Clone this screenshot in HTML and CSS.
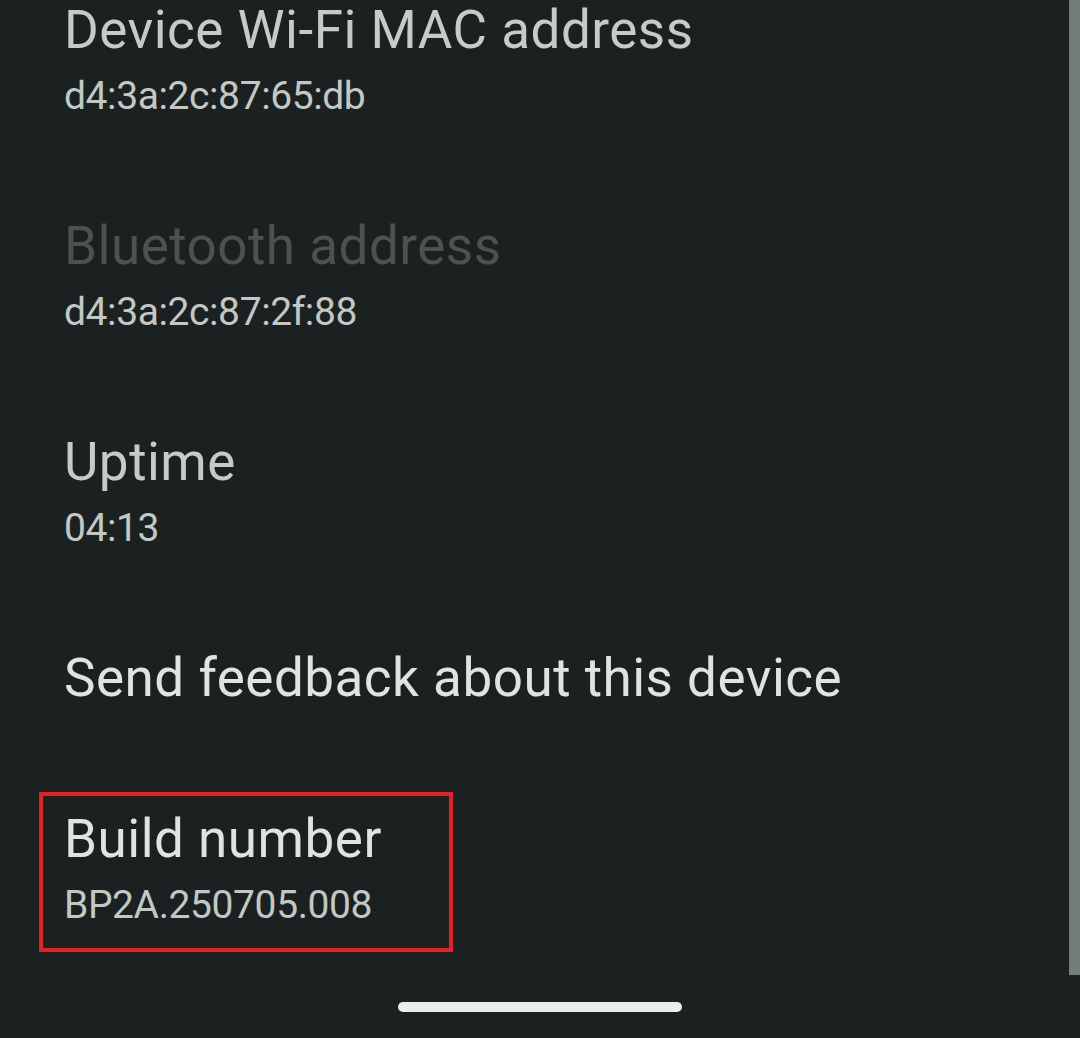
FILE: index.html
```html
<!DOCTYPE html>
<html>
<head>
<meta charset="utf-8">
<link rel="stylesheet" href="styles.css">
</head>
<body>
<div class="screen">
  <div class="list">
    <div class="item">
      <div class="title">Device Wi-Fi MAC address</div>
      <div class="summary">d4:3a:2c:87:65:db</div>
    </div>
    <div class="item disabled">
      <div class="title">Bluetooth address</div>
      <div class="summary">d4:3a:2c:87:2f:88</div>
    </div>
    <div class="item">
      <div class="title">Uptime</div>
      <div class="summary">04:13</div>
    </div>
    <div class="item single">
      <div class="title bright">Send feedback about this device</div>
    </div>
    <div class="item build">
      <div class="title bright">Build number</div>
      <div class="summary">BP2A.250705.008</div>
      <div class="highlight"></div>
    </div>
  </div>
  <div class="scrollbar"></div>
  <div class="handle"></div>
</div>
</body>
</html>
```
FILE: styles.css
```css
html, body {
  margin: 0;
  padding: 0;
  background: #1b2120;
}
.screen {
  position: relative;
  width: 1080px;
  height: 1038px;
  overflow: hidden;
  background: #1b2120;
  font-family: Roboto, "Noto Sans", sans-serif;
}
.list {
  margin-top: -44px;
}
.item {
  position: relative;
  padding: 42px 0 42px 64px;
}
.item.single {
  padding-bottom: 55px;
}
.title {
  font-size: 53px;
  line-height: 64px;
  letter-spacing: 0.5px;
  color: #c5ccc7;
  white-space: nowrap;
}
.title.bright {
  color: #dfe4e0;
}
.disabled .title {
  color: #4b524f;
}
.summary {
  font-size: 39px;
  line-height: 68px;
  letter-spacing: -0.4px;
  color: #c2c9c4;
  white-space: nowrap;
}
.highlight {
  position: absolute;
  top: 27px;
  left: 39px;
  width: 414px;
  height: 160px;
  box-sizing: border-box;
  border: 4px solid #e41f26;
}
.scrollbar {
  position: absolute;
  top: 0;
  right: 0;
  width: 11px;
  height: 975px;
  background: #747d79;
}
.handle {
  position: absolute;
  left: 398px;
  top: 1002px;
  width: 284px;
  height: 10px;
  border-radius: 5px;
  background: #ececec;
}
```
